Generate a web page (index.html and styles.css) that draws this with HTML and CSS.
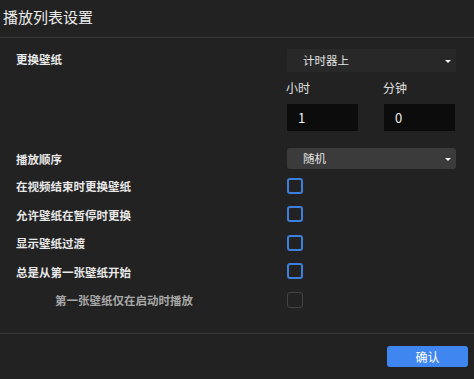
FILE: index.html
```html
<!DOCTYPE html>
<html lang="zh">
<head>
<meta charset="utf-8">
<title>播放列表设置</title>
<link rel="stylesheet" href="styles.css">
</head>
<body>
<div class="dialog">
  <header class="header">播放列表设置</header>
  <main class="content">
    <div class="row row-top">
      <div class="label label-tall">更换壁纸</div>
      <div class="control">
        <div class="select select-plain">计时器上<span class="caret"></span></div>
        <div class="time">
          <div class="field">
            <div class="field-label">小时</div>
            <div class="input">1</div>
          </div>
          <div class="field">
            <div class="field-label">分钟</div>
            <div class="input">0</div>
          </div>
        </div>
      </div>
    </div>
    <div class="row row-order">
      <div class="label">播放顺序</div>
      <div class="control">
        <div class="select select-raised">随机<span class="caret"></span></div>
      </div>
    </div>
    <div class="checks">
      <div class="row check-row">
        <div class="label">在视频结束时更换壁纸</div>
        <div class="control"><span class="checkbox"></span></div>
      </div>
      <div class="row check-row">
        <div class="label">允许壁纸在暂停时更换</div>
        <div class="control"><span class="checkbox"></span></div>
      </div>
      <div class="row check-row">
        <div class="label">显示壁纸过渡</div>
        <div class="control"><span class="checkbox"></span></div>
      </div>
      <div class="row check-row">
        <div class="label">总是从第一张壁纸开始</div>
        <div class="control"><span class="checkbox"></span></div>
      </div>
      <div class="row check-row">
        <div class="label label-sub">第一张壁纸仅在启动时播放</div>
        <div class="control"><span class="checkbox checkbox-disabled"></span></div>
      </div>
    </div>
  </main>
  <footer class="footer">
    <button class="btn-primary">确认</button>
  </footer>
</div>
</body>
</html>
```
FILE: styles.css
```css
* { box-sizing: border-box; }
html, body {
  margin: 0;
  padding: 0;
  background: #222222;
}
body {
  font-family: "Noto Sans CJK SC", "Noto Sans", sans-serif;
  color: #e6e6e6;
}
.dialog {
  height: 379px;
  display: flex;
  flex-direction: column;
}
.header {
  height: 38px;
  padding-left: 3px;
  font-size: 15px;
  line-height: 34px;
  color: #ececec;
  border-bottom: 1px solid #363636;
}
.content {
  flex: 1;
  padding: 11px 0 0 16px;
}
.row {
  display: flex;
}
.label {
  width: 271px;
  flex: none;
  font-size: 11.5px;
  font-weight: 700;
  color: #e8e8e8;
}
.label-tall {
  line-height: 21px;
}
.control {
  display: flex;
  flex-direction: column;
}
.select {
  position: relative;
  width: 169px;
  padding-left: 16px;
  font-size: 11.5px;
  color: #e2e2e2;
}
.select-plain {
  height: 23px;
  line-height: 23px;
  background: #282828;
}
.select-raised {
  height: 21px;
  line-height: 21px;
  background: #3b3b3b;
  border-radius: 3px;
}
.caret {
  position: absolute;
  right: 5px;
  top: 50%;
  margin-top: -1px;
  border-left: 3px solid transparent;
  border-right: 3px solid transparent;
  border-top: 3px solid #f2f2f2;
}
.time {
  display: flex;
  gap: 26px;
  margin-top: 8px;
}
.field-label {
  height: 16px;
  line-height: 16px;
  font-size: 12px;
  color: #e0e0e0;
  margin-left: -1px;
}
.input {
  margin-top: 8px;
  width: 71px;
  height: 27px;
  line-height: 27px;
  padding-left: 11px;
  background: #0c0c0c;
  font-size: 13px;
  color: #f0f0f0;
}
.row-order {
  margin-top: 17px;
  align-items: center;
}
.checks {
  margin-top: 3px;
}
.check-row {
  height: 28.5px;
  align-items: center;
}
.label-sub {
  padding-left: 39px;
  color: #a8a8a8;
}
.checkbox {
  display: block;
  width: 16px;
  height: 16px;
  border: 2px solid #3d7fdc;
  border-radius: 3px;
  margin-top: -1px;
}
.checkbox-disabled {
  border: 1.5px solid #444444;
}
.footer {
  height: 46px;
  border-top: 1px solid #363636;
  display: flex;
  justify-content: flex-end;
  padding: 12px 6px 0 0;
}
.btn-primary {
  width: 81px;
  height: 21px;
  border: none;
  border-radius: 3px;
  background: #3f86f0;
  color: #ffffff;
  font-family: "Noto Sans CJK SC", "Noto Sans", sans-serif;
  font-size: 12px;
  padding: 0;
}
```
